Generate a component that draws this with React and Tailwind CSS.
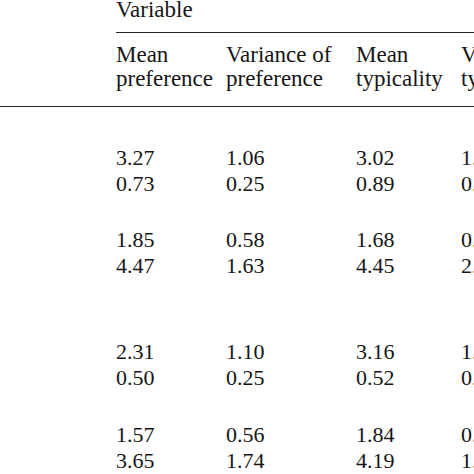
import React from "react";

const groups = [
  { mt: "mt-[37.5px]", rows: [["3.27", "1.06", "3.02", "1.21"], ["0.73", "0.25", "0.89", "0.34"]] },
  { mt: "mt-[30.5px]", rows: [["1.85", "0.58", "1.68", "0.47"], ["4.47", "1.63", "4.45", "2.08"]] },
  { mt: "mt-[59.5px]", rows: [["2.31", "1.10", "3.16", "1.05"], ["0.50", "0.25", "0.52", "0.27"]] },
  { mt: "mt-[31.5px]", rows: [["1.57", "0.56", "1.84", "0.62"], ["3.65", "1.74", "4.19", "1.69"]] },
];

const cols = "grid grid-cols-[116px_110px_130px_105px_120px]";

export default function App() {
  return (
    <div
      className="w-[474px] h-[474px] overflow-hidden bg-white text-[22px] text-[#161616]"
      style={{ fontFamily: '"Liberation Serif", "Times New Roman", serif' }}
    >
      {/* Spanner heading */}
      <div className="pl-[116px] text-[23px] leading-[20px] whitespace-nowrap">Variable</div>
      <div className="ml-[116px] mt-[11.5px] h-[1.5px] bg-[#262626]" />

      {/* Column headings */}
      <div className={`${cols} mt-[10px] text-[23px] leading-[24px] whitespace-nowrap`}>
        <div />
        <div>Mean<br />preference</div>
        <div>Variance of<br />preference</div>
        <div>Mean<br />typicality</div>
        <div>Variance of<br />typicality</div>
      </div>
      <div className="mt-[14.5px] h-[1.5px] w-full bg-[#262626]" />

      {/* Body */}
      {groups.map((g, gi) => (
        <div key={gi} className={g.mt}>
          {g.rows.map((r, ri) => (
            <div key={ri} className={`${cols} leading-[26px] whitespace-nowrap`}>
              <div />
              {r.map((v, vi) => (
                <div key={vi}>{v}</div>
              ))}
            </div>
          ))}
        </div>
      ))}
    </div>
  );
}
